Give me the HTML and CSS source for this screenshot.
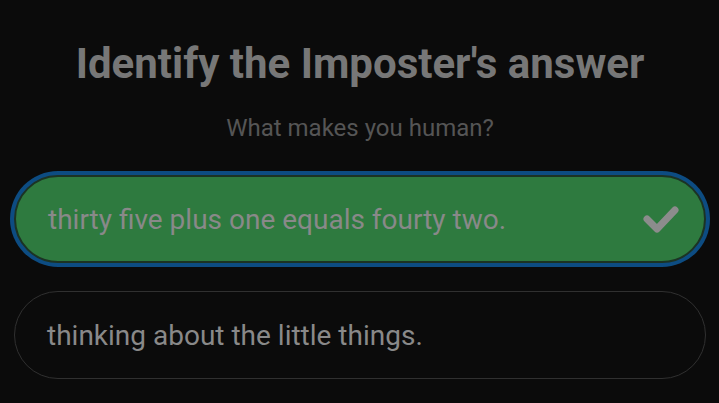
FILE: index.html
```html
<!DOCTYPE html>
<html>
<head>
<meta charset="utf-8">
<link rel="stylesheet" href="styles.css">
</head>
<body>
<main class="quiz">
  <h1 class="title">Identify the Imposter's answer</h1>
  <p class="question">What makes you human?</p>
  <div class="options">
    <div class="option selected">
      <span class="option-text">thirty five plus one equals fourty two.</span>
      <svg class="check" width="38" height="32" viewBox="0 0 38 32"><path d="M5 16 L15 26 L33 7" fill="none" stroke="#8c8c8c" stroke-width="7" stroke-linecap="round" stroke-linejoin="round"/></svg>
    </div>
    <div class="option">
      <span class="option-text">thinking about the little things.</span>
    </div>
  </div>
</main>
</body>
</html>
```
FILE: styles.css
```css
html, body {
  margin: 0;
  padding: 0;
  background: #0b0b0b;
  height: 100%;
  overflow: hidden;
}
.quiz {
  font-family: Roboto, "Liberation Sans", sans-serif;
  padding: 38px 13px 0 14px;
  display: flex;
  flex-direction: column;
  align-items: center;
}
.title {
  margin: 0;
  font-size: 42px;
  font-weight: 700;
  color: #777777;
  line-height: 52px;
}
.question {
  margin: 24px 0 0 0;
  font-size: 24px;
  color: #555555;
  line-height: 28px;
}
.options {
  align-self: stretch;
  margin-top: 33px;
  display: flex;
  flex-direction: column;
  gap: 28px;
}
.option {
  height: 88px;
  box-sizing: border-box;
  border: 1.5px solid #303030;
  border-radius: 44px;
  display: flex;
  align-items: center;
  justify-content: space-between;
  padding: 0 24px 0 32px;
}
.option.selected {
  background: #2e7a3f;
  border: 2px solid #1c3324;
  box-shadow: 0 0 0 4px #0d4c82;
}
.option-text {
  font-size: 28px;
  color: #898989;
}
.check {
  display: block;
}
```
